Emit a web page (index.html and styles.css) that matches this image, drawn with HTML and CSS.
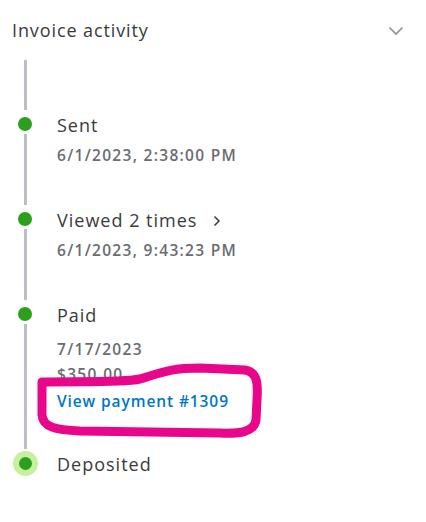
FILE: index.html
```html
<!DOCTYPE html>
<html lang="en">
<head>
    <meta charset="UTF-8">
    <meta name="viewport" content="width=device-width, initial-scale=1.0">
    <title>Invoice activity</title>
    <link rel="stylesheet" href="styles.css">
</head>
<body>
    <div class="panel">
        <div class="panel-header">
            <span class="panel-title">Invoice activity</span>
            <svg class="chevron" width="16" height="10" viewBox="0 0 16 10">
                <path d="M1.5 1.5 L8 8 L14.5 1.5" fill="none" stroke="#8d9096" stroke-width="1.6"/>
            </svg>
        </div>

        <div class="timeline">
            <div class="lead"><span class="seg"></span></div>

            <div class="event">
                <div class="rail"><span class="dot"></span><span class="seg"></span></div>
                <div class="body">
                    <div class="event-title">Sent</div>
                    <div class="meta">6/1/2023, 2:38:00 PM</div>
                </div>
            </div>

            <div class="event">
                <div class="rail"><span class="dot"></span><span class="seg"></span></div>
                <div class="body">
                    <div class="event-title">Viewed 2 times
                        <svg class="arrow" width="8" height="12" viewBox="0 0 8 12">
                            <path d="M1.5 1.5 L6 6 L1.5 10.5" fill="none" stroke="#393a3d" stroke-width="1.5"/>
                        </svg>
                    </div>
                    <div class="meta">6/1/2023, 9:43:23 PM</div>
                </div>
            </div>

            <div class="event event-paid">
                <div class="rail"><span class="dot"></span><span class="seg"></span></div>
                <div class="body">
                    <div class="event-title">Paid</div>
                    <div class="meta meta-paid">7/17/2023</div>
                    <div class="meta meta-amount">$350.00</div>
                    <a class="link" href="#">View payment #1309</a>
                </div>
            </div>

            <div class="event event-last">
                <div class="rail"><span class="dot dot-current"></span></div>
                <div class="body">
                    <div class="event-title">Deposited</div>
                </div>
            </div>
        </div>

        <svg class="scribble" width="426" height="522" viewBox="0 0 426 522">
            <path d="M42 382 C 80 381, 120 383, 140 379 C 160 373, 170 368, 200 368 L 245 370 C 258 372, 258 385, 257 400 L 256 420 C 254 432, 240 434, 220 433 L 80 431 C 55 430, 43 427, 42 415 Z"
                  fill="none" stroke="#e8068a" stroke-width="9" stroke-linejoin="round"/>
        </svg>
    </div>
</body>
</html>
```

FILE: styles.css
```css
body {
    margin: 0;
    background: #ffffff;
    font-family: "Open Sans", "Noto Sans", sans-serif;
    color: #393a3d;
}
.panel {
    position: relative;
    width: 426px;
    height: 522px;
}
.panel-header {
    display: flex;
    align-items: center;
    justify-content: space-between;
    padding: 18px 22px 0 12px;
    height: 24px;
}
.panel-title {
    font-size: 18px;
    line-height: 24px;
    letter-spacing: 0.9px;
}
.chevron {
    margin-top: 2px;
}
.timeline {
    padding: 18px 0 0 12px;
}
.lead {
    width: 26px;
    height: 50px;
    display: flex;
    flex-direction: column;
    align-items: center;
    margin-bottom: 3px;
}
.seg {
    display: block;
    width: 3px;
    background: #babec5;
    flex: 1;
}
.event {
    display: grid;
    grid-template-columns: 26px 1fr;
    column-gap: 19px;
    height: 95px;
}
.event-paid {
    height: 149px;
}
.event-last {
    height: auto;
}
.rail {
    display: flex;
    flex-direction: column;
    align-items: center;
}
.rail .seg {
    margin: 3px 0 3px;
}
.dot {
    width: 14px;
    height: 14px;
    margin-top: 4px;
    border-radius: 50%;
    background: #2ca01c;
    flex: none;
}
.dot-current {
    width: 13px;
    height: 13px;
    margin-top: -1px;
    border: 6px solid #c8ef9e;
}
.event-title {
    font-size: 18px;
    line-height: 24px;
    letter-spacing: 1px;
    display: flex;
    align-items: center;
    gap: 16px;
}
.arrow {
    margin-top: 1px;
}
.meta {
    margin-top: 8px;
    font-size: 15.5px;
    line-height: 20px;
    font-weight: 600;
    letter-spacing: 1.3px;
    color: #6b6c72;
}
.meta-paid {
    margin-top: 12px;
}
.meta-amount {
    margin-top: 5px;
}
.link {
    display: block;
    margin-top: 7px;
    font-size: 15.5px;
    line-height: 20px;
    font-weight: 600;
    letter-spacing: 0.9px;
    color: #0077c5;
    text-decoration: none;
}
.scribble {
    position: absolute;
    top: 0;
    left: 0;
    pointer-events: none;
}
```
